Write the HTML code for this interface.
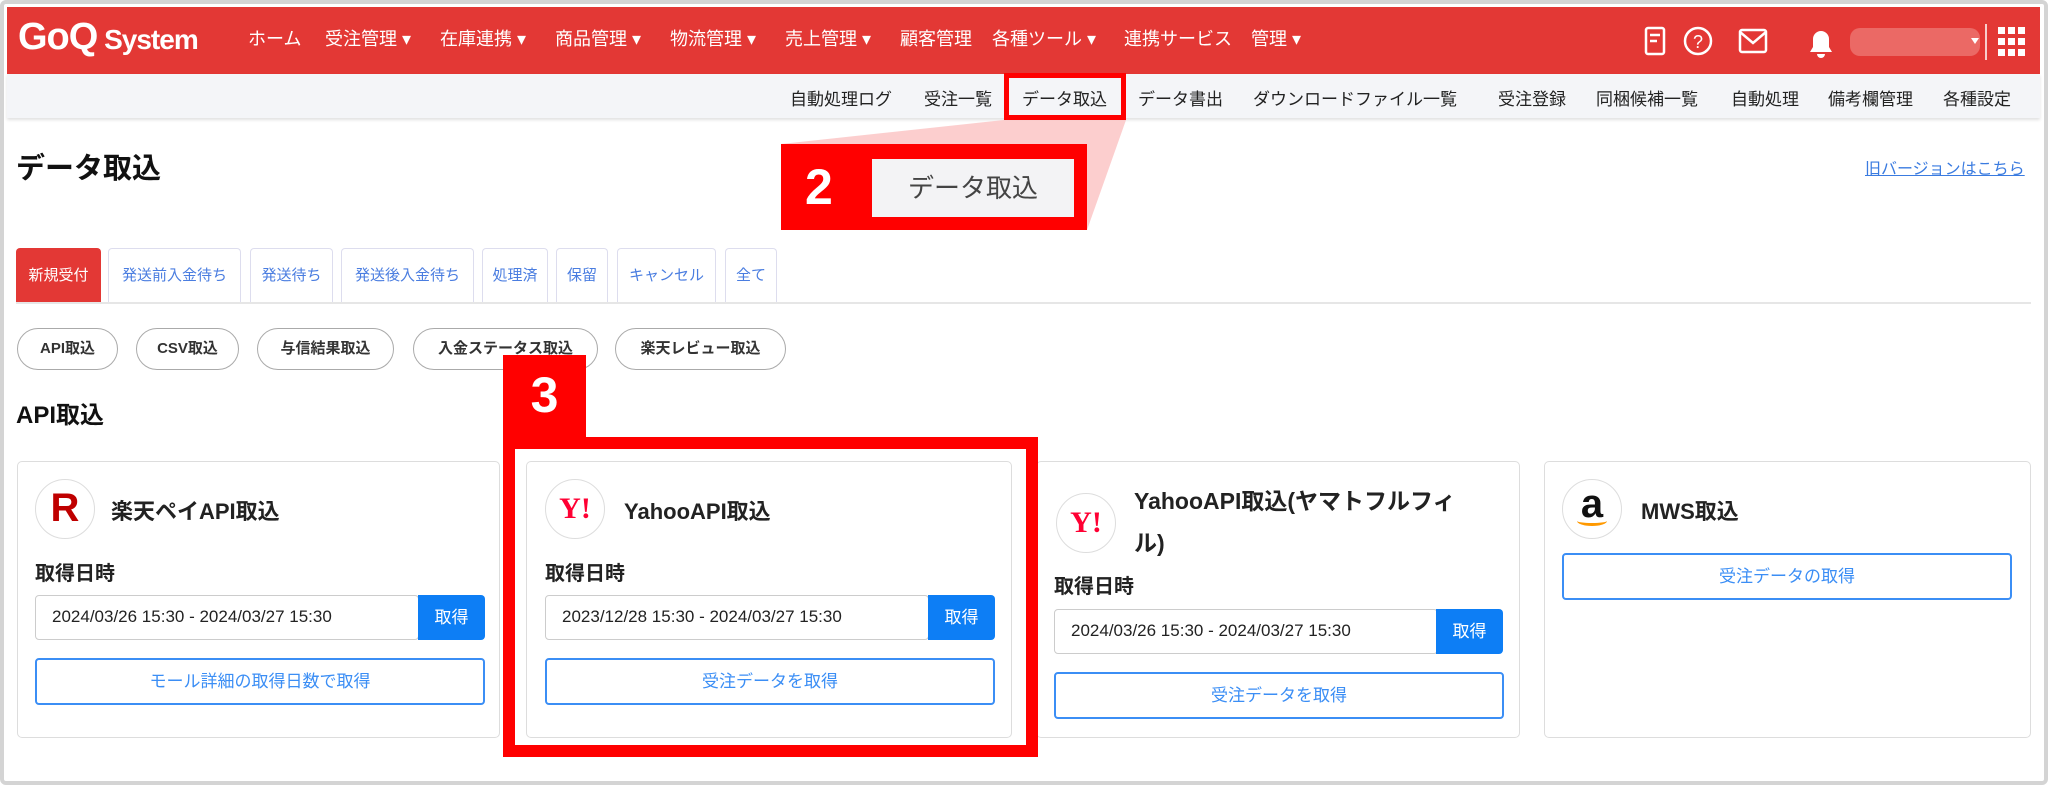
<!DOCTYPE html>
<html><head><meta charset="utf-8"><style>
*{box-sizing:border-box;margin:0;padding:0}
body{width:2048px;height:785px;position:relative;overflow:hidden;background:#fff;font-family:"Liberation Sans","Noto Sans CJK JP",sans-serif;color:#222}
.a{position:absolute;white-space:nowrap}
#frame{left:0;top:0;width:2048px;height:785px;border:4px solid #d4d4d4;border-radius:6px}
#hdr{left:7px;top:7px;width:2033px;height:67px;background:#e33835}
.nav{top:25px;color:#fff;font-size:18px}
#sub{left:7px;top:74px;width:2033px;height:44px;background:#f4f5f8;box-shadow:0 2px 3px rgba(0,0,0,.12)}
.sn{top:85px;font-size:17px;color:#222}
.tab{top:248px;height:55px;border:1px solid #dde;border-bottom:none;border-radius:4px 4px 0 0;color:#4a7de0;font-size:15px;line-height:54px;text-align:center}
.pill{top:328px;height:42px;border:1.5px solid #aaa;border-radius:21px;font-size:15px;font-weight:bold;line-height:39px;text-align:center;color:#333}
.card{top:461px;height:277px;border:1.5px solid #ddd;border-radius:5px}
.ic{width:60px;height:60px;border:1.5px solid #ddd;border-radius:50%;text-align:center}
.ct{font-size:22px;font-weight:bold;color:#222}
.lb{font-size:20px;font-weight:bold}
.inp{height:45px;border:1.5px solid #ccc;border-radius:4px;font-size:17px;line-height:42px;padding-left:16px;color:#222}
.gb{height:45px;background:#0d7ef5;color:#fff;border-radius:0 4px 4px 0;font-size:17px;line-height:45px;text-align:center;width:67px}
.ob{height:47px;border:2px solid #3b8ef5;border-radius:4px;color:#3b8ef5;font-size:17px;line-height:43px;text-align:center}
</style></head><body>
<div class="a" id="hdr"></div>
<div class="a" style="left:18px;top:16px;color:#fff;font-size:38px;font-weight:bold;letter-spacing:-1px">GoQ<span style="font-size:28px;font-weight:bold"> System</span></div>
<div class="a nav" style="left:248px">ホーム</div>
<div class="a nav" style="left:325px">受注管理 ▾</div>
<div class="a nav" style="left:440px">在庫連携 ▾</div>
<div class="a nav" style="left:555px">商品管理 ▾</div>
<div class="a nav" style="left:670px">物流管理 ▾</div>
<div class="a nav" style="left:785px">売上管理 ▾</div>
<div class="a nav" style="left:900px">顧客管理</div>
<div class="a nav" style="left:992px">各種ツール ▾</div>
<div class="a nav" style="left:1124px">連携サービス</div>
<div class="a nav" style="left:1251px">管理 ▾</div>
<svg class="a" style="left:1640px;top:24px" width="400" height="36" viewBox="0 0 400 36">
<g fill="none" stroke="#fff" stroke-width="2.5">
<rect x="6" y="4" width="18" height="26" rx="2"/><line x1="10" y1="11" x2="20" y2="11"/><line x1="10" y1="17" x2="17" y2="17"/>
<circle cx="58" cy="17" r="13"/>
<rect x="100" y="6" width="26" height="22" rx="2"/><polyline points="100,8 113,19 126,8"/>
</g>
<text x="53" y="24" fill="#fff" font-size="18" font-family="Liberation Sans">?</text>
<path d="M170 28 h22 l-3-5 v-8 a8 8 0 0 0-16 0 v8z M177 30 a4 4 0 0 0 8 0z" fill="#fff"/>
<rect x="210" y="4" width="130" height="28" rx="10" fill="#f08a86" opacity=".6"/>
<path d="M331 14 l8 0 -4 6z" fill="#fff"/>
<line x1="346" y1="0" x2="346" y2="36" stroke="#fff" stroke-width="1.5"/>
<g fill="#fff"><rect x="358" y="3" width="7" height="7"/><rect x="368" y="3" width="7" height="7"/><rect x="378" y="3" width="7" height="7"/><rect x="358" y="14" width="7" height="7"/><rect x="368" y="14" width="7" height="7"/><rect x="378" y="14" width="7" height="7"/><rect x="358" y="25" width="7" height="7"/><rect x="368" y="25" width="7" height="7"/><rect x="378" y="25" width="7" height="7"/></g>
</svg>
<div class="a" id="sub"></div>
<div class="a sn" style="left:790px">自動処理ログ</div>
<div class="a sn" style="left:924px">受注一覧</div>
<div class="a sn" style="left:1022px">データ取込</div>
<div class="a sn" style="left:1138px">データ書出</div>
<div class="a sn" style="left:1253px">ダウンロードファイル一覧</div>
<div class="a sn" style="left:1498px">受注登録</div>
<div class="a sn" style="left:1596px">同梱候補一覧</div>
<div class="a sn" style="left:1731px">自動処理</div>
<div class="a sn" style="left:1828px">備考欄管理</div>
<div class="a sn" style="left:1943px">各種設定</div>
<svg class="a" style="left:0;top:0" width="2048" height="260"><polygon points="1004,120 1126,120 1087,230 781,144" fill="#fbc6c6" opacity=".85"/></svg>
<div class="a" style="left:1004px;top:73px;width:122px;height:47px;border:5px solid #f00"></div>
<div class="a" style="left:16px;top:145px;font-size:29px;font-weight:bold;color:#111">データ取込</div>
<div class="a" style="left:1865px;top:155px;font-size:16px;color:#3a7be0;text-decoration:underline">旧バージョンはこちら</div>
<div class="a" style="left:781px;top:144px;width:306px;height:86px;background:#f00"></div>
<div class="a" style="left:872px;top:159px;width:202px;height:58px;background:#f3f3f5;font-size:26px;color:#444;line-height:58px;text-align:center">データ取込</div>
<div class="a" style="left:805px;top:158px;font-size:50px;font-weight:bold;color:#fff">2</div>
<div class="a tab" style="left:16px;width:85px;background:#e33835;color:#fff;border-color:#e33835">新規受付</div>
<div class="a tab" style="left:108px;width:133px">発送前入金待ち</div>
<div class="a tab" style="left:250px;width:83px">発送待ち</div>
<div class="a tab" style="left:341px;width:133px">発送後入金待ち</div>
<div class="a tab" style="left:482px;width:66px">処理済</div>
<div class="a tab" style="left:556px;width:52px">保留</div>
<div class="a tab" style="left:617px;width:99px">キャンセル</div>
<div class="a tab" style="left:725px;width:52px">全て</div>
<div class="a" style="left:16px;top:302px;width:2015px;height:2px;background:#e6e6e6"></div>
<div class="a pill" style="left:17px;width:101px">API取込</div>
<div class="a pill" style="left:136px;width:103px">CSV取込</div>
<div class="a pill" style="left:257px;width:137px">与信結果取込</div>
<div class="a pill" style="left:413px;width:185px">入金ステータス取込</div>
<div class="a pill" style="left:615px;width:171px">楽天レビュー取込</div>
<div class="a" style="left:16px;top:395px;font-size:24px;font-weight:bold;color:#111">API取込</div>

<div class="a card" style="left:17px;width:483px"></div>
<div class="a ic" style="left:35px;top:479px;font:bold 40px 'Liberation Sans';color:#bf0000;line-height:56px">R</div>
<div class="a ct" style="left:111px;top:494px">楽天ペイAPI取込</div>
<div class="a lb" style="left:35px;top:557px">取得日時</div>
<div class="a inp" style="left:35px;top:595px;width:384px">2024/03/26 15:30 - 2024/03/27 15:30</div>
<div class="a gb" style="left:418px;top:595px">取得</div>
<div class="a ob" style="left:35px;top:658px;width:450px">モール詳細の取得日数で取得</div>

<div class="a card" style="left:526px;width:486px"></div>
<div class="a ic" style="left:545px;top:479px;font:bold 30px 'Liberation Serif';color:#ff0033;line-height:58px">Y!</div>
<div class="a ct" style="left:624px;top:494px">YahooAPI取込</div>
<div class="a lb" style="left:545px;top:557px">取得日時</div>
<div class="a inp" style="left:545px;top:595px;width:384px">2023/12/28 15:30 - 2024/03/27 15:30</div>
<div class="a gb" style="left:928px;top:595px">取得</div>
<div class="a ob" style="left:545px;top:658px;width:450px">受注データを取得</div>

<div class="a card" style="left:1036px;width:484px"></div>
<div class="a ic" style="left:1056px;top:493px;font:bold 30px 'Liberation Serif';color:#ff0033;line-height:58px">Y!</div>
<div class="a ct" style="left:1134px;top:480px;line-height:42px;white-space:normal;width:330px;word-break:break-all;font-size:23px">YahooAPI取込(ヤマトフルフィル)</div>
<div class="a lb" style="left:1054px;top:570px">取得日時</div>
<div class="a inp" style="left:1054px;top:609px;width:384px">2024/03/26 15:30 - 2024/03/27 15:30</div>
<div class="a gb" style="left:1436px;top:609px">取得</div>
<div class="a ob" style="left:1054px;top:672px;width:450px">受注データを取得</div>

<div class="a card" style="left:1544px;width:487px"></div>
<div class="a ic" style="left:1562px;top:479px;font:bold 40px 'Liberation Sans';color:#111;line-height:48px">a<div style="width:30px;height:10px;border-bottom:3px solid #f90;border-radius:0 0 50% 50%;margin:-12px auto 0"></div></div>
<div class="a ct" style="left:1641px;top:494px">MWS取込</div>
<div class="a ob" style="left:1562px;top:553px;width:450px">受注データの取得</div>

<div class="a" style="left:503px;top:437px;width:535px;height:320px;border:12px solid #f00"></div>
<div class="a" style="left:503px;top:355px;width:83px;height:90px;background:#f00;color:#fff;font-size:50px;font-weight:bold;text-align:center;line-height:80px">3</div>
<div class="a" id="frame"></div>
</body></html>
